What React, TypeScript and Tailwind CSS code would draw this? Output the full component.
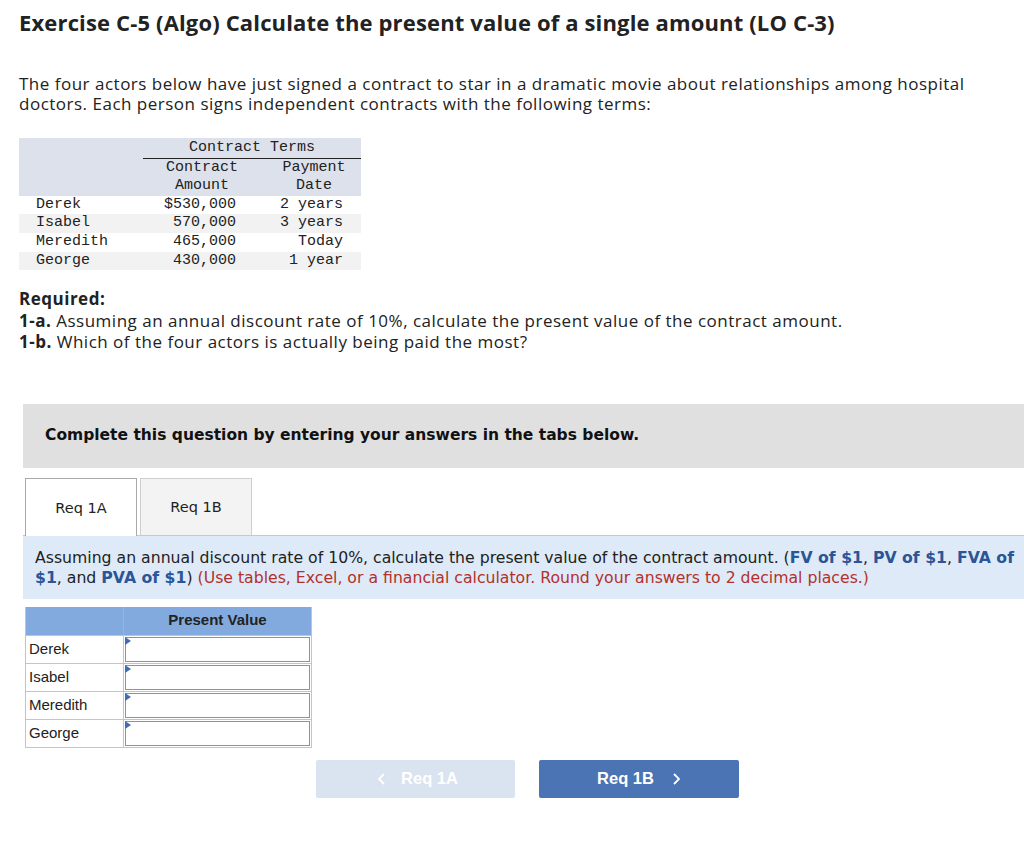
import React from "react";

const contracts = [
  { name: "Derek", amount: "$530,000", date: "2 years" },
  { name: "Isabel", amount: "570,000", date: "3 years" },
  { name: "Meredith", amount: "465,000", date: "Today" },
  { name: "George", amount: "430,000", date: "1 year" },
];

function ContractTable() {
  return (
    <table className="mt-[24px] w-[342px] border-collapse font-['Liberation_Mono',monospace] text-[15px] leading-[18.6px] text-[#222]">
      <thead className="bg-[#dde1eb]">
        <tr>
          <th className="w-[124px] pt-[1px]" />
          <th colSpan={2} className="border-b border-[#222] pt-[1px] text-center font-normal">
            Contract Terms
          </th>
        </tr>
        <tr>
          <th />
          <th className="w-[118px] text-center font-normal">
            Contract
            <br />
            Amount
          </th>
          <th className="w-[100px] pl-[6px] text-center font-normal">
            Payment
            <br />
            Date
          </th>
        </tr>
      </thead>
      <tbody>
        {contracts.map((c, i) => (
          <tr key={c.name} className={i % 2 === 1 ? "bg-[#f2f2f2]" : "bg-white"}>
            <td className="pl-[17px]">{c.name}</td>
            <td className="pr-[25px] text-right">{c.amount}</td>
            <td className="pr-[18px] text-right">{c.date}</td>
          </tr>
        ))}
      </tbody>
    </table>
  );
}

function AnswerRow({ name }: { name: string }) {
  return (
    <div className="flex h-[28px] border-t border-[#c4c4c4]">
      <div className="flex w-[98px] items-center border-r border-[#c4c4c4] pl-[3px] text-[15px] text-[#222]">
        {name}
      </div>
      <div className="relative flex-1 p-[1px]">
        <div className="h-full border border-[#6f98d2] bg-white" />
        <span className="absolute left-[1px] top-[1px] h-0 w-0 border-y-[4px] border-l-[6px] border-y-transparent border-l-[#3f6db5]" />
      </div>
    </div>
  );
}

export default function App() {
  return (
    <div className="w-[1024px] overflow-hidden bg-white">
      <div className="w-[1060px] pb-[56px] font-['Open_Sans',sans-serif] text-[#222]">
        <div className="pl-[19px]">
          <h1 className="pt-[7px] text-[22px] font-bold leading-[30px] tracking-[0.15px] text-[#222]">
            Exercise C-5 (Algo) Calculate the present value of a single amount (LO C-3)
          </h1>
          <p className="mt-[37px] w-[952px] text-[17px] leading-[20px] tracking-[0.5px]">
            The four actors below have just signed a contract to star in a dramatic movie about relationships among
            hospital doctors. Each person signs independent contracts with the following terms:
          </p>
          <ContractTable />
          <div className="mt-[18px] text-[17px] leading-[21.5px] tracking-[0.5px]">
            <p className="font-bold">Required:</p>
            <p>
              <span className="font-bold">1-a.</span> Assuming an annual discount rate of 10%, calculate the present
              value of the contract amount.
            </p>
            <p>
              <span className="font-bold">1-b.</span> Which of the four actors is actually being paid the most?
            </p>
          </div>
        </div>

        <div className="ml-[23px] mt-[51px] w-[1009px]">
          <div className="flex h-[64px] items-center bg-[#e0e0e0] pl-[22px] font-['DejaVu_Sans',sans-serif] text-[15.5px] font-bold text-[#111]">
            Complete this question by entering your answers in the tabs below.
          </div>

          <div className="mt-[10px] flex items-end gap-[3px] border-b border-[#c8c8c8] pl-[2px] font-['DejaVu_Sans',sans-serif] text-[14.5px] text-[#222]">
            <div className="-mb-px flex h-[58px] w-[112px] items-center justify-center border border-b-0 border-[#a9a9a9] bg-white pt-[4px]">
              Req 1A
            </div>
            <div className="flex h-[57px] w-[112px] items-center justify-center border border-b-0 border-[#cfcfcf] bg-[#f3f3f3] pt-[3px]">
              Req 1B
            </div>
          </div>

          <div className="bg-[#deeaf7] pb-[11px] pl-[12px] pr-[2px] pt-[12px] font-['DejaVu_Sans',sans-serif] text-[15.7px] leading-[20px] text-[#222]">
            Assuming an annual discount rate of 10%, calculate the present value of the contract amount. (
            <span className="font-bold text-[#2a5597]">FV of $1</span>,{" "}
            <span className="font-bold text-[#2a5597]">PV of $1</span>,{" "}
            <span className="font-bold text-[#2a5597]">FVA of</span>{" "}
            <span className="font-bold text-[#2a5597]">$1</span>, and{" "}
            <span className="font-bold text-[#2a5597]">PVA of $1</span>){" "}
            <span className="text-[#b3302c]">
              (Use tables, Excel, or a financial calculator. Round your answers to 2 decimal places.)
            </span>
          </div>

          <div className="ml-[2px] mt-[8px] w-[287px] border border-[#c4c4c4] border-t-0 font-['Liberation_Sans',sans-serif]">
            <div className="flex h-[28px] bg-[#83aade]">
              <div className="w-[98px] border-r border-[#9bb5d8]" />
              <div className="flex flex-1 items-center justify-center text-[15px] font-bold text-[#222]">
                Present Value
              </div>
            </div>
            {contracts.map((c) => (
              <AnswerRow key={c.name} name={c.name} />
            ))}
          </div>

          <div className="mt-[12px] flex justify-center gap-[24px] font-['Liberation_Sans',sans-serif] text-[16.5px] font-bold text-white">
            <button className="flex h-[38px] w-[199px] items-center justify-center gap-[15px] rounded-[2px] bg-[#dae3f0] pl-[4px]">
              <svg width="9" height="14" viewBox="0 0 9 14" fill="none" stroke="white" strokeWidth="1.8">
                <path d="M7 2 L2 7 L7 12" />
              </svg>
              <span>Req 1A</span>
            </button>
            <button className="flex h-[38px] w-[200px] items-center justify-center gap-[18px] rounded-[2px] bg-[#4a74b4]">
              <span>Req 1B</span>
              <svg width="9" height="14" viewBox="0 0 9 14" fill="none" stroke="white" strokeWidth="1.8">
                <path d="M2 2 L7 7 L2 12" />
              </svg>
            </button>
          </div>
        </div>
      </div>
    </div>
  );
}
